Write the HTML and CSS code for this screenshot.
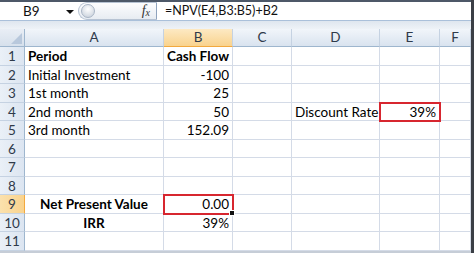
FILE: index.html
```html
<!DOCTYPE html>
<html lang="en">
<head>
    <meta charset="UTF-8">
    <title>NPV Worksheet</title>
    <link rel="stylesheet" href="styles.css">
</head>
<body>
    <div class="window">
        <div class="formula-bar">
            <div class="name-box">
                <span class="cell-ref">B9</span>
                <span class="drop-arrow"></span>
            </div>
            <div class="fx-pill">
                <span class="knob"></span>
                <span class="fx">f<sub>x</sub></span>
            </div>
            <div class="formula">=NPV(E4,B3:B5)+B2</div>
        </div>
        <div class="ribbon-gap"></div>

        <div class="sheet">
            <div class="corner"><span class="corner-tri"></span></div>
            <div class="col-head">A</div>
            <div class="col-head selected">B</div>
            <div class="col-head">C</div>
            <div class="col-head">D</div>
            <div class="col-head">E</div>
            <div class="col-head">F</div>

            <div class="row-head">1</div>
            <div class="cell bold">Period</div>
            <div class="cell bold">Cash Flow</div>
            <div class="cell"></div><div class="cell"></div><div class="cell"></div><div class="cell"></div>

            <div class="row-head">2</div>
            <div class="cell">Initial Investment</div>
            <div class="cell num">-100</div>
            <div class="cell"></div><div class="cell"></div><div class="cell"></div><div class="cell"></div>

            <div class="row-head">3</div>
            <div class="cell">1st month</div>
            <div class="cell num">25</div>
            <div class="cell"></div><div class="cell"></div><div class="cell"></div><div class="cell"></div>

            <div class="row-head">4</div>
            <div class="cell">2nd month</div>
            <div class="cell num">50</div>
            <div class="cell"></div>
            <div class="cell">Discount Rate</div>
            <div class="cell num marked">39%</div>
            <div class="cell"></div>

            <div class="row-head">5</div>
            <div class="cell">3rd month</div>
            <div class="cell num">152.09</div>
            <div class="cell"></div><div class="cell"></div><div class="cell"></div><div class="cell"></div>

            <div class="row-head">6</div>
            <div class="cell"></div><div class="cell"></div><div class="cell"></div><div class="cell"></div><div class="cell"></div><div class="cell"></div>

            <div class="row-head">7</div>
            <div class="cell"></div><div class="cell"></div><div class="cell"></div><div class="cell"></div><div class="cell"></div><div class="cell"></div>

            <div class="row-head">8</div>
            <div class="cell"></div><div class="cell"></div><div class="cell"></div><div class="cell"></div><div class="cell"></div><div class="cell"></div>

            <div class="row-head selected">9</div>
            <div class="cell bold center">Net Present Value</div>
            <div class="cell num marked">0.00<span class="fill-handle"></span></div>
            <div class="cell"></div><div class="cell"></div><div class="cell"></div><div class="cell"></div>

            <div class="row-head">10</div>
            <div class="cell bold center">IRR</div>
            <div class="cell num">39%</div>
            <div class="cell"></div><div class="cell"></div><div class="cell"></div><div class="cell"></div>

            <div class="row-head">11</div>
            <div class="cell"></div><div class="cell"></div><div class="cell"></div><div class="cell"></div><div class="cell"></div><div class="cell"></div>
        </div>
    </div>
</body>
</html>
```

FILE: styles.css
```css
body {
    margin: 0;
    padding: 0;
    background-color: #fff;
    font-family: Lato, "Open Sans", Arial, sans-serif;
    overflow: hidden;
}

.window {
    width: 471px;
    height: 253px;
    border-right: 3px solid #3b3f46;
    background-color: #c6cdd7;
    overflow: hidden;
}

/* formula bar */
.formula-bar {
    display: flex;
    height: 18px;
    border-top: 2px solid #4d5868;
    border-bottom: 1px solid #aac0da;
    background-color: #fff;
}

.name-box {
    width: 76px;
    display: flex;
    align-items: center;
    position: relative;
}

.cell-ref {
    margin-left: 23px;
    font-size: 13.5px;
    color: #111;
}

.drop-arrow {
    position: absolute;
    left: 66px;
    top: 8px;
    border-left: 4px solid transparent;
    border-right: 4px solid transparent;
    border-top: 4px solid #111;
}

.fx-pill {
    width: 79px;
    margin-left: 2px;
    height: 18px;
    border: 1px solid #b7c3d3;
    border-right: 1px solid #8fa3bd;
    border-radius: 9px 0 0 9px;
    background: linear-gradient(#fdfdfe, #e7ecf2);
    display: flex;
    align-items: center;
    justify-content: space-between;
    box-sizing: border-box;
}

.knob {
    width: 12px;
    height: 12px;
    margin-left: 2px;
    border-radius: 50%;
    background: radial-gradient(circle at 50% 35%, #ffffff, #c3ccd8);
    border: 1px solid #a9b5c5;
}

.fx {
    margin-right: 6px;
    font-family: "Liberation Serif", serif;
    font-style: italic;
    font-size: 14px;
    color: #333;
    line-height: 1;
}

.fx sub {
    font-size: 10px;
    vertical-align: -1px;
}

.formula {
    margin-left: 8px;
    font-size: 12.5px;
    color: #111;
    line-height: 18px;
}

.ribbon-gap {
    height: 8px;
    background: linear-gradient(#dfe6ef, #eef2f7);
}

/* sheet grid */
.sheet {
    display: grid;
    grid-template-columns: 25px 139px 69px 59px 88px 60px 31px;
    grid-template-rows: 18px repeat(11, 18.5px);
    font-size: 13.5px;
    color: #000;
    background-color: #fff;
}

.corner {
    background: linear-gradient(#e9eef5, #d6e0ec);
    border-right: 1px solid #9eb6ce;
    border-bottom: 1px solid #9eb6ce;
    position: relative;
}

.corner-tri {
    position: absolute;
    right: 2px;
    bottom: 2px;
    border-left: 11px solid transparent;
    border-bottom: 11px solid #b8c8dc;
}

.col-head {
    background: linear-gradient(#f1f5fa, #d9e3ef);
    border-right: 1px solid #c5d2e2;
    border-bottom: 1px solid #9eb6ce;
    text-align: center;
    color: #2f3a4a;
    font-size: 13.5px;
    line-height: 17px;
}

.row-head {
    background: linear-gradient(90deg, #eaf0f7, #dce5f1);
    border-right: 1px solid #9eb6ce;
    border-bottom: 1px solid #c5d2e2;
    text-align: center;
    color: #2f3a4a;
    font-size: 13.5px;
    line-height: 18px;
}

.col-head.selected {
    background: linear-gradient(#fde9c3, #f9d38e);
    border-bottom-color: #f2a93f;
}

.row-head.selected {
    background: linear-gradient(90deg, #fbe1ad, #f9d38e);
    border-right-color: #f2a93f;
}

.cell {
    border-right: 1px solid #d4dbe7;
    border-bottom: 1px solid #d4dbe7;
    padding: 0 3px;
    line-height: 18px;
    white-space: nowrap;
    position: relative;
}

.bold {
    font-weight: bold;
}

.center {
    text-align: center;
}

.num {
    text-align: right;
}

.marked {
    outline: 2px solid #d7262f;
    outline-offset: -1px;
    z-index: 1;
}

.fill-handle {
    position: absolute;
    right: -3px;
    bottom: -3px;
    width: 4px;
    height: 4px;
    background-color: #111;
    border: 1px solid #fff;
}
```
